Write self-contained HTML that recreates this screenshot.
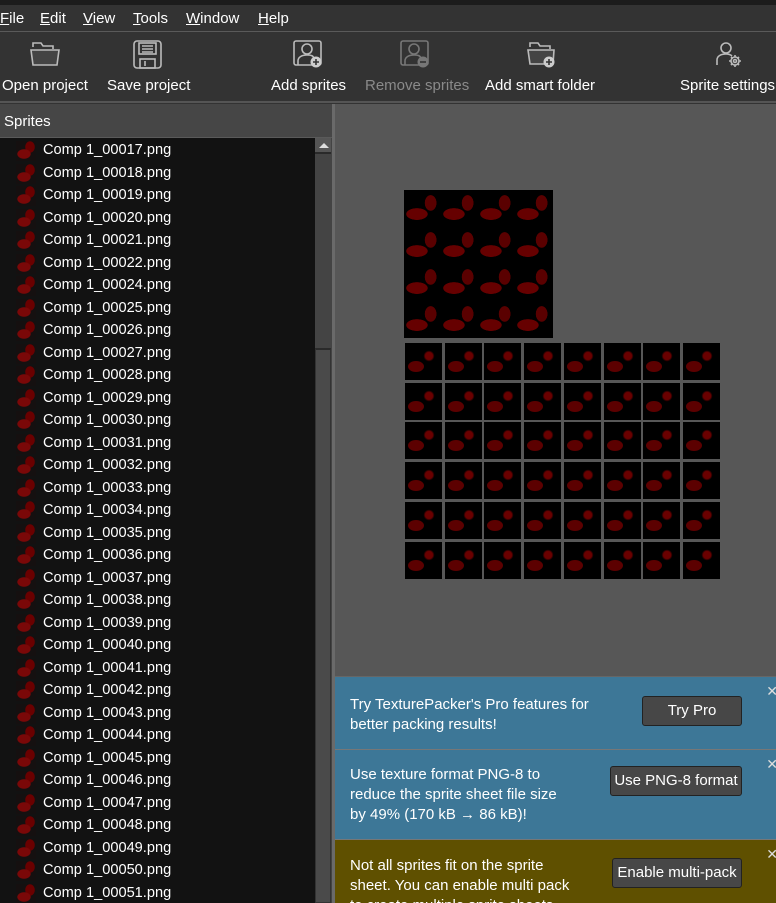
<!DOCTYPE html>
<html><head><meta charset="utf-8"><style>
*{margin:0;padding:0;box-sizing:border-box}
html,body{width:776px;height:903px;overflow:hidden}
body{background:#333;font-family:"Liberation Sans",sans-serif;color:#fff;position:relative}
.a{position:absolute}
.menu{top:0;left:0;width:776px;height:32px;background:#333;border-top:5px solid #1c1c1c;border-bottom:1px solid #5a5a5a}
.menu span{position:absolute;top:5px;font-size:15px}
.tb{top:32px;left:0;width:776px;height:71px;background:#333;border-bottom:2px solid #555}
.tb .l{position:absolute;top:45px;font-size:15px;white-space:nowrap}
.hdr{top:104px;left:0;width:334px;height:34px;background:#464646;border-bottom:1px solid #5a5a5a;font-size:15px;padding:9px 4px}
.list{top:138px;left:0;width:315px;height:765px;background:#121212;overflow:hidden}
.row{position:absolute;left:16px;height:22px;font-size:14.6px}
.row i{position:absolute;left:0;top:1px;width:20px;height:20px;background:radial-gradient(ellipse 7px 5px at 40% 65%,#7a0808 0 90%,transparent 100%),radial-gradient(ellipse 5px 6px at 70% 30%,#6a0000 0 90%,transparent 100%),#151010}
.row b{position:absolute;left:27px;top:2px;font-weight:normal;white-space:nowrap}
.sb{top:138px;left:315px;width:17px;height:765px;background:#444}
.split{top:104px;left:332px;width:3px;height:799px;background:#6a6a6a}
.canvas{top:104px;left:335px;width:441px;height:572px;background:#575757}
.t{position:absolute;width:37px;height:37px;background:#000;overflow:hidden}
.t:before{content:"";position:absolute;left:3px;top:18px;width:16px;height:11px;border-radius:50%;background:#5c0000}
.t:after{content:"";position:absolute;left:18px;top:6px;width:12px;height:14px;border-radius:40%;background:radial-gradient(circle,#6a0000 0 40%,transparent 60%)}
.msg{left:335px;width:441px;font-size:15px;line-height:20px;padding-left:15px;overflow:hidden}
.btn{position:absolute;background:#474747;border:1px solid #222;border-radius:3px;font-size:15px;text-align:center;color:#fff}
.x{position:absolute;right:-2px;top:4px;font-size:14px;color:#ddd}
</style></head><body>
<div class="a menu">
<span style="left:0"><u>F</u>ile</span><span style="left:40px"><u>E</u>dit</span><span style="left:83px"><u>V</u>iew</span><span style="left:133px"><u>T</u>ools</span><span style="left:186px"><u>W</u>indow</span><span style="left:258px"><u>H</u>elp</span>
</div>
<div class="a tb">
<svg class="a" style="left:30px;top:8px" width="30" height="28" viewBox="0 0 30 28" fill="none" stroke="#bbb" stroke-width="1.6"><path d="M3 7V3h8l2 3h10v3"/><path d="M1 10h28l-2 15H3z" fill="#444"/></svg>
<svg class="a" style="left:133px;top:8px" width="30" height="30" viewBox="0 0 30 30" fill="none" stroke="#bbb" stroke-width="1.6"><rect x="1" y="1" width="27" height="27" rx="3"/><rect x="6" y="3" width="17" height="11"/><path d="M9 6h11M9 9h11M9 12h11"/><rect x="7" y="19" width="15" height="9"/><path d="M12 21v5"/></svg>
<svg class="a" style="left:293px;top:8px" width="30" height="30" viewBox="0 0 30 30" fill="none" stroke="#bbb" stroke-width="1.6"><rect x="1" y="1" width="27" height="24" rx="2"/><circle cx="14" cy="9" r="5"/><path d="M5 25v-4c0-4 4-6 9-6s6 1 7 3"/><circle cx="23" cy="22" r="5.5" fill="#ccc" stroke="none"/><path d="M23 19v6M20 22h6" stroke="#333" stroke-width="1.6"/></svg>
<svg class="a" style="left:400px;top:8px" width="30" height="30" viewBox="0 0 30 30" fill="none" stroke="#777" stroke-width="1.6"><rect x="1" y="1" width="27" height="24" rx="2"/><circle cx="14" cy="9" r="5"/><path d="M5 25v-4c0-4 4-6 9-6s6 1 7 3"/><circle cx="23" cy="22" r="5.5" fill="#777" stroke="none"/><path d="M20 22h6" stroke="#333" stroke-width="1.6"/></svg>
<svg class="a" style="left:527px;top:8px" width="30" height="30" viewBox="0 0 30 30" fill="none" stroke="#bbb" stroke-width="1.6"><path d="M3 7V3h8l2 3h10v3"/><path d="M1 10h26l-1 14H3z" fill="#444"/><circle cx="22" cy="22" r="5.5" fill="#ccc" stroke="none"/><path d="M22 19v6M19 22h6" stroke="#333" stroke-width="1.6"/></svg>
<svg class="a" style="left:715px;top:8px" width="30" height="30" viewBox="0 0 30 30" fill="none" stroke="#bbb" stroke-width="1.6"><circle cx="11" cy="8" r="5"/><path d="M2 25v-5c0-4 4-6 9-6 3 0 5 1 6 2"/><circle cx="20" cy="21" r="4"/><circle cx="20" cy="21" r="1.5"/><path d="M20 15v2M20 25v2M14 21h2M24 21h2M16 17l1.5 1.5M22.5 23.5L24 25M16 25l1.5-1.5M22.5 18.5L24 17"/></svg>
<span class="l" style="left:2px">Open project</span><span class="l" style="left:107px">Save project</span><span class="l" style="left:271px">Add sprites</span><span class="l" style="left:365px;color:#8a8a8a">Remove sprites</span><span class="l" style="left:485px">Add smart folder</span><span class="l" style="left:680px">Sprite settings</span>
</div>
<div class="a hdr">Sprites</div>
<div class="a list" id="list"></div>
<div class="a sb">
<div class="a" style="left:0;top:0;width:16px;height:16px;background:#555;border-bottom:2px solid #2a2a2a"></div>
<div class="a" style="left:4px;top:5px;width:0;height:0;border-left:5px solid transparent;border-right:5px solid transparent;border-bottom:5px solid #ddd"></div>
<div class="a" style="left:0;top:210px;width:16px;height:555px;background:#4a4a4a;border:1px solid #333;border-top:2px solid #2a2a2a"></div>
</div>
<div class="a split"></div>
<div class="a canvas">
<div class="a" style="left:69px;top:86px;width:149px;height:148px;background:#000;background-image:radial-gradient(ellipse 11px 6px at 35% 65%,#600 0 95%,transparent 100%),radial-gradient(ellipse 6px 8px at 72% 35%,#5a0000 0 95%,transparent 100%);background-size:37px 37px"></div>
<div id="g"></div>
</div>
<div class="a msg" style="top:676px;height:73px;background:#3d7797;border-top:1px solid #666;padding-top:18px">Try TexturePacker's Pro features for<br>better packing results!<div class="btn" style="left:307px;top:19px;width:100px;height:30px;line-height:28px">Try Pro</div><span class="x">✕</span></div>
<div class="a msg" style="top:749px;height:90px;background:#3d7797;border-top:1px solid #777;padding-top:15px">Use texture format PNG-8 to<br>reduce the sprite sheet file size<br>by 49% (170 kB → 86 kB)!<div class="btn" style="left:275px;top:16px;width:132px;height:30px;line-height:28px">Use PNG-8 format</div><span class="x">✕</span></div>
<div class="a msg" style="top:839px;height:64px;background:#5f5000;border-top:1px solid #777;padding-top:16px">Not all sprites fit on the sprite<br>sheet. You can enable multi pack<br>to create multiple sprite sheets.<div class="btn" style="left:277px;top:18px;width:130px;height:30px;line-height:28px">Enable multi-pack</div><span class="x">✕</span></div>
<script>
var g=document.getElementById('g'),h='',ys=[239,279,318,358,398,438],i,j;
for(i=0;i<6;i++)for(j=0;j<8;j++)h+='<div class="t" style="left:'+(70+j*39.7)+'px;top:'+ys[i]+'px"></div>';
g.innerHTML=h;
var n=[17,18,19,20,21,22,24,25,26,27,28,29,30,31,32,33,34,35,36,37,38,39,40,41,42,43,44,45,46,47,48,49,50,51],s='';
for(i=0;i<n.length;i++)s+='<div class="row" style="top:'+(2+i*22.5)+'px"><i></i><b>Comp 1_000'+n[i]+'.png</b></div>';
document.getElementById('list').innerHTML=s;
</script>
</body></html>
